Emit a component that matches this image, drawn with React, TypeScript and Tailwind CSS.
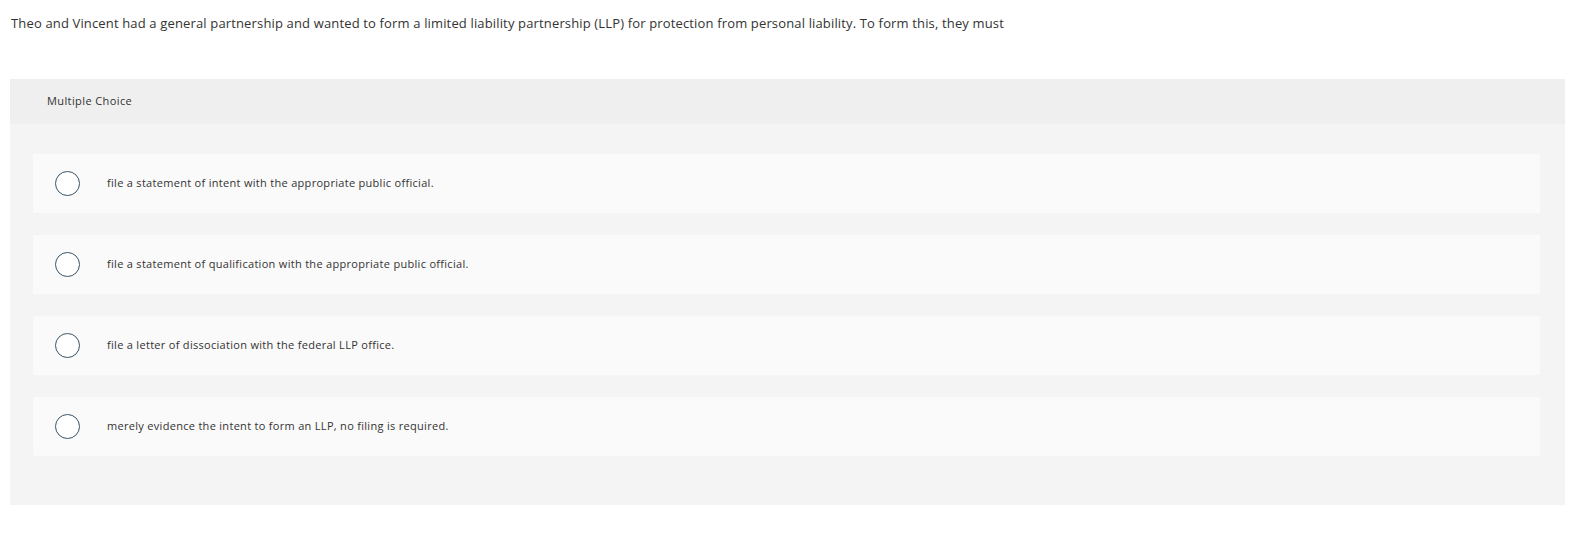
const options = [
  "file a statement of intent with the appropriate public official.",
  "file a statement of qualification with the appropriate public official.",
  "file a letter of dissociation with the federal LLP office.",
  "merely evidence the intent to form an LLP, no filing is required.",
];

export default function App() {
  return (
    <div className="min-h-[558px] bg-white text-[#333] font-['Open_Sans','Liberation_Sans',sans-serif]">
      <p className="pl-[11px] pt-[15px] text-[13px] leading-[17px] tracking-[0.15px]">
        Theo and Vincent had a general partnership and wanted to form a limited liability partnership (LLP) for
        protection from personal liability. To form this, they must
      </p>

      <div className="ml-[10px] mt-[47px] w-[1555px] bg-[#f4f4f4]">
        <div className="flex h-[45px] items-center bg-[#efefef] pl-[37px] text-[11px] tracking-[0.4px]">
          Multiple Choice
        </div>

        <div className="flex flex-col gap-[22px] px-[23px] pb-[49px] pt-[30px]">
          {options.map((opt) => (
            <label
              key={opt}
              className="flex h-[59px] w-[1507px] cursor-pointer items-center rounded-[2px] bg-[#fafafa]"
            >
              <span className="ml-[22px] h-[25px] w-[25px] shrink-0 rounded-full border-[1.5px] border-[#3a5466] bg-white" />
              <span className="ml-[27px] text-[11px] tracking-[0.3px]">{opt}</span>
            </label>
          ))}
        </div>
      </div>
    </div>
  );
}
